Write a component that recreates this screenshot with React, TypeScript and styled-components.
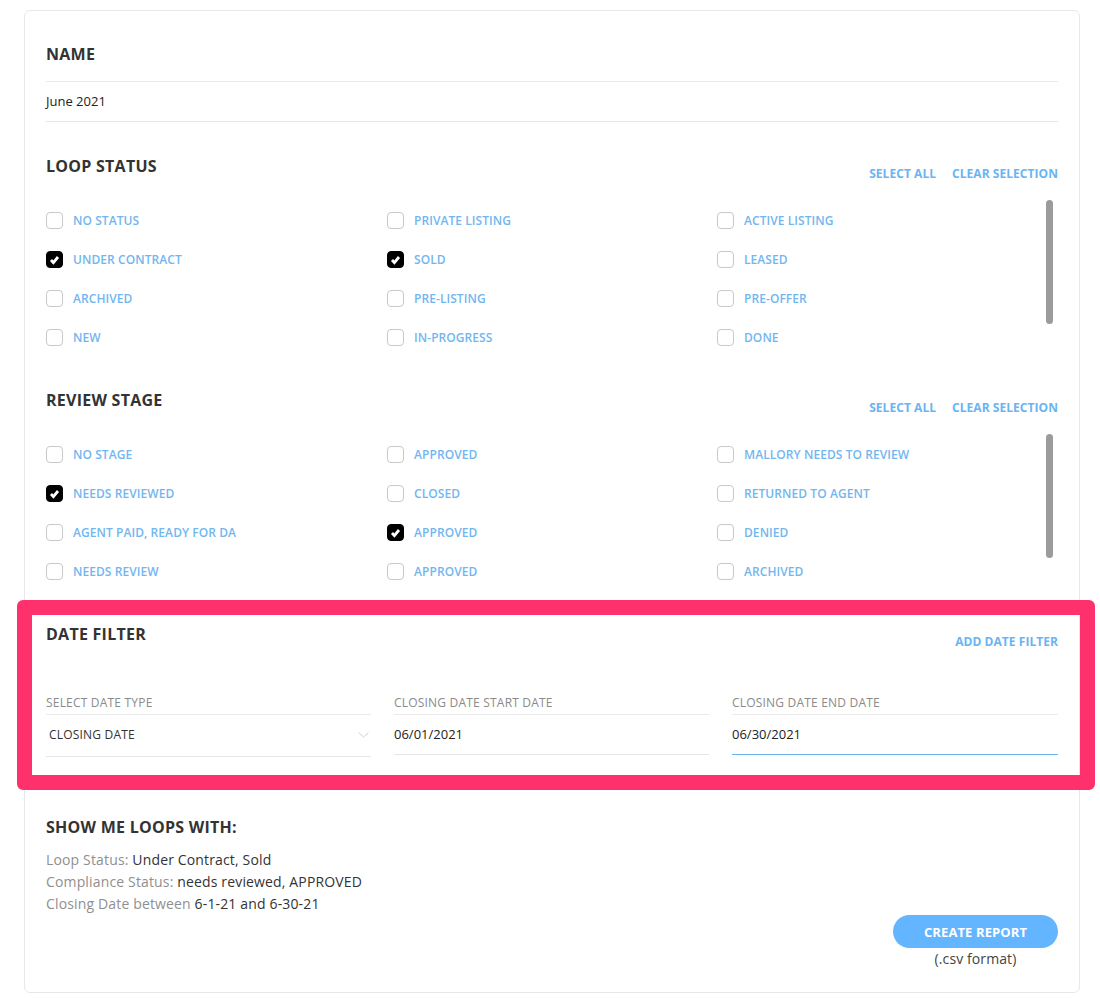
import React from 'react';
import styled, { createGlobalStyle } from 'styled-components';

const GlobalStyle = createGlobalStyle`
  html, body {
    margin: 0;
    padding: 0;
    background: #fff;
    font-family: 'Open Sans', 'Liberation Sans', sans-serif;
  }
  * {
    box-sizing: border-box;
  }
`;

const BLUE = '#6ab4f3';

const Card = styled.div`
  width: 1056px;
  height: 983px;
  margin: 10px 0 0 24px;
  padding: 32px 21px 0;
  background: #fff;
  border: 1px solid #e8e8e8;
  border-radius: 6px;
`;

const Title = styled.h2`
  margin: 0;
  font-size: 16px;
  line-height: 22px;
  font-weight: 700;
  letter-spacing: 0.26px;
  color: #333;
`;

const NameField = styled.div`
  height: 41px;
  margin-top: 16px;
  padding-bottom: 2px;
  display: flex;
  align-items: center;
  border-top: 1px solid #eaeaea;
  border-bottom: 1px solid #e6e6e6;
  font-size: 13px;
  color: #222;
`;

const Section = styled.section<{ $top: number }>`
  margin-top: ${(p) => p.$top}px;
`;

const SectionHead = styled.div`
  display: flex;
  justify-content: space-between;
  align-items: flex-start;
`;

const Actions = styled.div`
  display: flex;
  gap: 16px;
  padding-top: 11px;
`;

const ActionLink = styled.a`
  font-size: 12px;
  line-height: 16px;
  font-weight: 700;
  letter-spacing: 0.05px;
  color: ${BLUE};
  cursor: pointer;
`;

const ScrollArea = styled.div`
  display: flex;
  align-items: flex-start;
  margin-top: 18px;
`;

const OptionGrid = styled.div`
  flex: 1;
  display: grid;
  grid-template-columns: 341px 330px 1fr;
  grid-auto-rows: 39px;
  padding-top: 1px;
`;

const Option = styled.label`
  display: flex;
  align-items: center;
  gap: 10px;
  font-size: 12px;
  font-weight: 600;
  letter-spacing: 0.07px;
  color: #72b6ef;
`;

const Box = styled.span<{ $checked: boolean }>`
  width: 17px;
  height: 17px;
  display: flex;
  align-items: center;
  justify-content: center;
  border-radius: 4px;
  border: 1px solid ${(p) => (p.$checked ? '#000' : '#c9c9c9')};
  background: ${(p) => (p.$checked ? '#000' : '#fff')};
`;

const Thumb = styled.div`
  width: 7px;
  height: 124px;
  margin: 0 5px 0 0;
  border-radius: 4px;
  background: #9b9b9b;
`;

const DateSection = styled.section`
  position: relative;
  margin-top: 32px;
  height: 151px;
`;

const Highlight = styled.div`
  position: absolute;
  left: -29px;
  right: -37px;
  top: -23px;
  height: 190px;
  border: 15px solid #ff316d;
  border-radius: 6px;
  pointer-events: none;
`;

const DateGrid = styled.div`
  display: grid;
  grid-template-columns: 325px 315px 326px;
  column-gap: 23px;
  margin-top: 44px;
`;

const FieldLabel = styled.div`
  height: 21px;
  font-size: 12px;
  line-height: 18px;
  letter-spacing: 0.2px;
  color: #8a8a8a;
  border-bottom: 1px solid #eaeaea;
`;

const FieldValue = styled.div<{ $focused?: boolean; $select?: boolean }>`
  display: flex;
  align-items: center;
  justify-content: space-between;
  height: ${(p) => (p.$select ? 42 : 40)}px;
  padding: ${(p) => (p.$select ? '0 2px 2px 3px' : '0 0 2px')};
  font-size: ${(p) => (p.$select ? 12 : 13)}px;
  font-weight: ${(p) => (p.$select ? 500 : 400)};
  letter-spacing: ${(p) => (p.$select ? 0.2 : 0)}px;
  color: ${(p) => (p.$select ? '#333' : '#222')};
  border-bottom: 1px solid ${(p) => (p.$focused ? BLUE : '#e6e6e6')};
`;

const Footer = styled.div`
  display: flex;
  justify-content: space-between;
  align-items: flex-end;
  margin-top: 42px;
`;

const Summary = styled.div`
  padding-bottom: 54px;
`;

const SummaryList = styled.div`
  margin-top: 11px;
  font-size: 14px;
  line-height: 22px;
  letter-spacing: 0.15px;
  color: #333;
`;

const Muted = styled.span`
  color: #8f8f8f;
`;

const ReportColumn = styled.div`
  display: flex;
  flex-direction: column;
  align-items: center;
  width: 165px;
`;

const ReportButton = styled.button`
  width: 165px;
  height: 33px;
  border: 0;
  border-radius: 17px;
  background: #64b5ff;
  color: #fff;
  font-family: inherit;
  font-size: 13px;
  font-weight: 700;
  letter-spacing: 0.1px;
`;

const FormatNote = styled.div`
  margin-top: 1px;
  font-size: 14px;
  line-height: 20px;
  letter-spacing: 0.1px;
  color: #444;
`;

type TOption = { label: string; checked?: boolean };

const loopOptions: TOption[] = [
  { label: 'NO STATUS' },
  { label: 'PRIVATE LISTING' },
  { label: 'ACTIVE LISTING' },
  { label: 'UNDER CONTRACT', checked: true },
  { label: 'SOLD', checked: true },
  { label: 'LEASED' },
  { label: 'ARCHIVED' },
  { label: 'PRE-LISTING' },
  { label: 'PRE-OFFER' },
  { label: 'NEW' },
  { label: 'IN-PROGRESS' },
  { label: 'DONE' },
];

const stageOptions: TOption[] = [
  { label: 'NO STAGE' },
  { label: 'APPROVED' },
  { label: 'MALLORY NEEDS TO REVIEW' },
  { label: 'NEEDS REVIEWED', checked: true },
  { label: 'CLOSED' },
  { label: 'RETURNED TO AGENT' },
  { label: 'AGENT PAID, READY FOR DA' },
  { label: 'APPROVED', checked: true },
  { label: 'DENIED' },
  { label: 'NEEDS REVIEW' },
  { label: 'APPROVED' },
  { label: 'ARCHIVED' },
];

const CheckMark = () => (
  <svg width="11" height="10" viewBox="0 0 11 10">
    <path d="M2 5 L4.4 7.6 L9 2" fill="none" stroke="#fff" strokeWidth="2.8" />
  </svg>
);

const Chevron = () => (
  <svg width="11" height="6" viewBox="0 0 11 6">
    <path d="M0.5 0.5 L5.5 5 L10.5 0.5" fill="none" stroke="#d0d0d0" strokeWidth="1" />
  </svg>
);

const OptionSection = ({ title, top, options }: { title: string; top: number; options: TOption[] }) => (
  <Section $top={top}>
    <SectionHead>
      <Title>{title}</Title>
      <Actions>
        <ActionLink>SELECT ALL</ActionLink>
        <ActionLink>CLEAR SELECTION</ActionLink>
      </Actions>
    </SectionHead>
    <ScrollArea>
      <OptionGrid>
        {options.map((o, i) => (
          <Option key={i}>
            <Box $checked={!!o.checked}>{o.checked && <CheckMark />}</Box>
            {o.label}
          </Option>
        ))}
      </OptionGrid>
      <Thumb />
    </ScrollArea>
  </Section>
);

const App = () => {
  return (
    <>
      <GlobalStyle />
      <Card>
        <Title>NAME</Title>
        <NameField>June 2021</NameField>

        <OptionSection title="LOOP STATUS" top={33} options={loopOptions} />
        <OptionSection title="REVIEW STAGE" top={32} options={stageOptions} />

        <DateSection>
          <SectionHead>
            <Title>DATE FILTER</Title>
            <Actions>
              <ActionLink>ADD DATE FILTER</ActionLink>
            </Actions>
          </SectionHead>
          <DateGrid>
            <div>
              <FieldLabel>SELECT DATE TYPE</FieldLabel>
              <FieldValue $select>
                CLOSING DATE
                <Chevron />
              </FieldValue>
            </div>
            <div>
              <FieldLabel>CLOSING DATE START DATE</FieldLabel>
              <FieldValue>06/01/2021</FieldValue>
            </div>
            <div>
              <FieldLabel>CLOSING DATE END DATE</FieldLabel>
              <FieldValue $focused>06/30/2021</FieldValue>
            </div>
          </DateGrid>
          <Highlight />
        </DateSection>

        <Footer>
          <Summary>
            <Title>SHOW ME LOOPS WITH:</Title>
            <SummaryList>
              <div>
                <Muted>Loop Status:</Muted> Under Contract, Sold
              </div>
              <div>
                <Muted>Compliance Status:</Muted> needs reviewed, APPROVED
              </div>
              <div>
                <Muted>Closing Date between</Muted> 6-1-21 and 6-30-21
              </div>
            </SummaryList>
          </Summary>
          <ReportColumn>
            <ReportButton>CREATE REPORT</ReportButton>
            <FormatNote>(.csv format)</FormatNote>
          </ReportColumn>
        </Footer>
      </Card>
    </>
  );
};

export default App;
